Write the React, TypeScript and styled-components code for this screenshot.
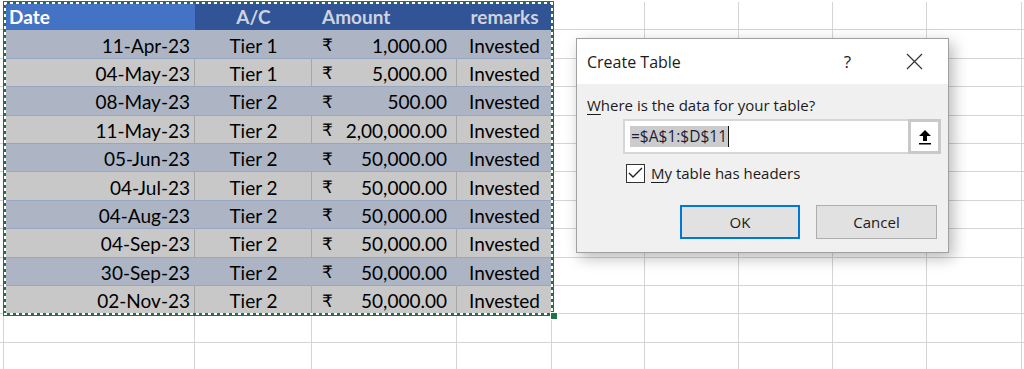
import React from 'react';
import styled, { createGlobalStyle } from 'styled-components';

const GlobalStyle = createGlobalStyle`
  body {
    margin: 0;
    background: #fff;
  }
  * {
    box-sizing: border-box;
  }
`;

const COLS = [191, 117, 145, 95, 93, 94, 94, 94, 95];
const GRID = '#d4d4d4';

const rows = [
  ['11-Apr-23', 'Tier 1', '1,000.00'],
  ['04-May-23', 'Tier 1', '5,000.00'],
  ['08-May-23', 'Tier 2', '500.00'],
  ['11-May-23', 'Tier 2', '2,00,000.00'],
  ['05-Jun-23', 'Tier 2', '50,000.00'],
  ['04-Jul-23', 'Tier 2', '50,000.00'],
  ['04-Aug-23', 'Tier 2', '50,000.00'],
  ['04-Sep-23', 'Tier 2', '50,000.00'],
  ['30-Sep-23', 'Tier 2', '50,000.00'],
  ['02-Nov-23', 'Tier 2', '50,000.00'],
];

const Page = styled.div`
  position: relative;
  width: 1024px;
  height: 369px;
  overflow: hidden;
  font-family: Lato, 'Liberation Sans', sans-serif;
`;

const Sheet = styled.div`
  display: flex;
  flex-direction: column;
  padding-top: 2px;
`;

const Row = styled.div`
  display: flex;
  height: 28.4px;
  flex: 0 0 auto;
`;

const Lead = styled.div`
  flex: 0 0 4px;
  height: 100%;
  border-right: 1px solid ${GRID};
  border-bottom: 1px solid ${GRID};
`;

const Cell = styled.div<{
  $w?: number;
  $bg?: string;
  $line?: string;
  $bottom?: string;
  $align?: 'left' | 'center' | 'right';
}>`
  flex: ${(p) => (p.$w ? `0 0 ${p.$w}px` : '1 1 auto')};
  height: 100%;
  display: flex;
  align-items: center;
  justify-content: ${(p) =>
    p.$align === 'right' ? 'flex-end' : p.$align === 'center' ? 'center' : 'flex-start'};
  padding: 2px 4px 0 5px;
  background: ${(p) => p.$bg || '#fff'};
  border-right: 1px solid ${(p) => p.$line || GRID};
  border-bottom: 1px solid ${(p) => p.$bottom || GRID};
  font-size: 19px;
  color: #000;
  white-space: nowrap;
`;

const HeadText = styled.span<{ $light?: boolean }>`
  font-weight: 700;
  color: ${(p) => (p.$light ? '#cdd3df' : '#fff')};
`;

const AmountCell = styled(Cell)`
  justify-content: space-between;
  padding: 2px 9px 0 10px;
`;

const Rupee = styled.span`
  font-family: 'DejaVu Sans', 'Noto Sans', sans-serif;
  font-size: 17px;
`;

const Selection = styled.div`
  position: absolute;
  left: 3px;
  top: 1px;
  width: 551px;
  height: 315px;
  pointer-events: none;
  border: 1px solid #217346;
  background:
    repeating-linear-gradient(90deg, #fff 0 3px, #217346 3px 6px) top left / 100% 2px no-repeat,
    repeating-linear-gradient(90deg, #fff 0 3px, #217346 3px 6px) bottom left / 100% 2px no-repeat,
    repeating-linear-gradient(180deg, #fff 0 3px, #217346 3px 6px) top left / 2px 100% no-repeat,
    repeating-linear-gradient(180deg, #fff 0 3px, #217346 3px 6px) top right / 2px 100% no-repeat;
`;

const Handle = styled.div`
  position: absolute;
  right: -5px;
  bottom: -5px;
  width: 8px;
  height: 8px;
  background: #217346;
  border: 1px solid #fff;
`;

const Dialog = styled.div`
  position: absolute;
  left: 576px;
  top: 38px;
  width: 373px;
  height: 215px;
  background: #f0f0f0;
  border: 1px solid #a0a0a0;
  box-shadow: 4px 5px 14px rgba(0, 0, 0, 0.28);
  display: flex;
  flex-direction: column;
  font-family: 'Open Sans', 'Noto Sans', sans-serif;
  color: #1b1b1b;
`;

const TitleBar = styled.div`
  height: 45px;
  background: #fff;
  display: flex;
  align-items: center;
  padding-left: 10px;
`;

const Title = styled.div`
  flex: 1;
  font-size: 16px;
`;

const TitleButton = styled.div`
  width: 67px;
  height: 45px;
  display: flex;
  align-items: center;
  justify-content: center;
  font-size: 17px;
  color: #222;
`;

const Body = styled.div`
  flex: 1;
  display: flex;
  flex-direction: column;
  padding: 11px 10px 0;
`;

const Label = styled.div`
  font-size: 15px;
  height: 22px;
`;

const InputRow = styled.div`
  display: flex;
  margin: 2px 0 0 36px;
  width: 318px;
  height: 35px;
`;

const Input = styled.div`
  flex: 1;
  background: #fff;
  border: 2px solid #d6d6d6;
  border-right: none;
  display: flex;
  align-items: center;
  padding-left: 5px;
`;

const Selected = styled.span`
  background: #cccccc;
  font-size: 15.5px;
  line-height: 21px;
  padding: 0 1px;
  color: #1c1c3a;
  border-right: 1.5px solid #111;
`;

const PickButton = styled.div`
  flex: 0 0 33px;
  background: #fff;
  border: 3px solid #c9c9c9;
  display: flex;
  align-items: center;
  justify-content: center;
`;

const CheckRow = styled.label`
  display: flex;
  align-items: center;
  gap: 6px;
  margin: 9px 0 0 39px;
  font-size: 15px;
`;

const Box = styled.span`
  width: 19px;
  height: 19px;
  border: 1px solid #333;
  background: #fff;
  display: flex;
  align-items: center;
  justify-content: center;
`;

const Buttons = styled.div`
  display: flex;
  gap: 16px;
  margin: 22px 0 0 93px;
`;

const Button = styled.div<{ $default?: boolean }>`
  width: ${(p) => (p.$default ? 120 : 121)}px;
  height: 34px;
  background: #e1e1e1;
  border: ${(p) => (p.$default ? '2px solid #0078d7' : '1px solid #adadad')};
  display: flex;
  align-items: center;
  justify-content: center;
  font-size: 15px;
`;

const Key = styled.span`
  text-decoration: underline;
  text-underline-offset: 3px;
`;

export default function App() {
  const tail = () => COLS.slice(4).map((w, i) => <Cell key={`t${i}`} $w={w} />);

  return (
    <Page>
      <GlobalStyle />
      <Sheet>
        <Row>
          <Lead />
          <Cell $w={COLS[0]} $bg="#4472c4" $line="#4472c4" $bottom="#4472c4">
            <HeadText>Date</HeadText>
          </Cell>
          <Cell $w={COLS[1]} $bg="#305496" $line="#305496" $bottom="#305496" $align="center">
            <HeadText $light>A/C</HeadText>
          </Cell>
          <Cell $w={COLS[2]} $bg="#305496" $line="#305496" $bottom="#305496" style={{ paddingLeft: 10 }}>
            <HeadText $light>Amount</HeadText>
          </Cell>
          <Cell $w={COLS[3]} $bg="#305496" $line="#305496" $bottom="#305496" $align="center">
            <HeadText $light>remarks</HeadText>
          </Cell>
          {tail()}
          <Cell />
        </Row>
        {rows.map(([date, tier, amount], i) => {
          const odd = i % 2 === 0;
          const bg = odd ? '#adb5c5' : '#c8c8c8';
          const line = odd ? '#adb5c5' : '#a6a6a6';
          const bottom = '#97a6c2';
          return (
            <Row key={date + i}>
              <Lead />
              <Cell $w={COLS[0]} $bg={bg} $line={line} $bottom={bottom} $align="right">
                {date}
              </Cell>
              <Cell $w={COLS[1]} $bg={bg} $line={line} $bottom={bottom} $align="center">
                {tier}
              </Cell>
              <AmountCell $w={COLS[2]} $bg={bg} $line={line} $bottom={bottom}>
                <Rupee>₹</Rupee>
                <span>{amount}</span>
              </AmountCell>
              <Cell $w={COLS[3]} $bg={bg} $line={odd ? bg : GRID} $bottom={bottom} $align="center">
                Invested
              </Cell>
              {tail()}
              <Cell />
            </Row>
          );
        })}
        {[0, 1].map((r) => (
          <Row key={`e${r}`}>
            <Lead />
            {COLS.map((w, i) => (
              <Cell key={i} $w={w} />
            ))}
            <Cell />
          </Row>
        ))}
      </Sheet>

      <Selection>
        <Handle />
      </Selection>

      <Dialog>
        <TitleBar>
          <Title>Create Table</Title>
          <TitleButton>?</TitleButton>
          <TitleButton>
            <svg width="17" height="17" viewBox="0 0 17 17">
              <path d="M1 1 L16 16 M16 1 L1 16" stroke="#333" strokeWidth="1.2" fill="none" />
            </svg>
          </TitleButton>
        </TitleBar>
        <Body>
          <Label>
            <Key>W</Key>here is the data for your table?
          </Label>
          <InputRow>
            <Input>
              <Selected>=$A$1:$D$11</Selected>
            </Input>
            <PickButton>
              <svg width="14" height="16" viewBox="0 0 14 16">
                <path d="M7 1 L13 7 L9 7 L9 12 L5 12 L5 7 L1 7 Z" fill="#000" />
                <rect x="1" y="14" width="12" height="1.5" fill="#000" />
              </svg>
            </PickButton>
          </InputRow>
          <CheckRow>
            <Box>
              <svg width="15" height="12" viewBox="0 0 15 12">
                <path d="M1 6 L5 10 L14 1" stroke="#222" strokeWidth="1.4" fill="none" />
              </svg>
            </Box>
            <span>
              <Key>M</Key>y table has headers
            </span>
          </CheckRow>
          <Buttons>
            <Button $default>OK</Button>
            <Button>Cancel</Button>
          </Buttons>
        </Body>
      </Dialog>
    </Page>
  );
}
